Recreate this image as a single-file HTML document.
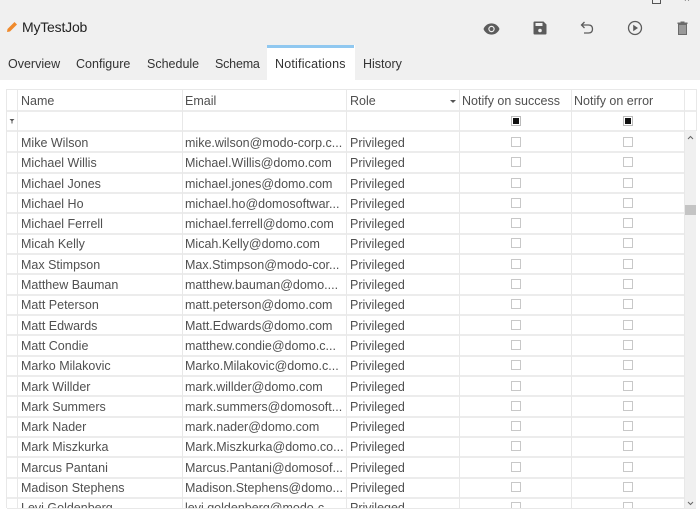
<!DOCTYPE html>
<html><head><meta charset="utf-8">
<style>
html,body{margin:0;padding:0;background:#fff}
#p{position:relative;width:700px;height:511px;overflow:hidden;background:#fff;font-family:"Liberation Sans",sans-serif;font-size:12.5px;color:#505050}
#p div{position:absolute;white-space:nowrap}
.hd{left:0;top:0;width:700px;height:80px;background:#f0f0f0}
.tab{top:57px;font-size:12.5px;color:#333;line-height:15px}
.v{top:89px;width:1px;height:419px;background:#e8e8e8}
.h{left:7px;width:678px;height:2px;background:#ececec}
.t{line-height:16px;height:16px}
.n{left:21px;margin-top:1px}.e{left:185px;margin-top:1px}.r{left:350px;margin-top:1px}
.c{width:8px;height:8px;border:1px solid #c8c8c8;background:#fff}
.c1{left:511px}.c2{left:623px}
.f{width:8px;height:8px;border:1px solid #bbb;background:#fff}
.f:after{content:"";position:absolute;left:1px;top:1px;width:6px;height:6px;background:#111}
</style></head><body>
<div id="p">
<div class="hd"></div>
<svg style="position:absolute;left:6px;top:20px" width="13" height="13" viewBox="0 0 13 13"><path d="M1 12 L1.5 9 L8.5 2 L11 4.5 L4 11.5 Z" fill="#f08a2c"/></svg>
<div style="left:22px;top:18px;font-size:14px;letter-spacing:-.2px;line-height:18px;color:#222">MyTestJob</div>
<div style="left:267px;top:45px;width:88px;height:35px;background:#fff"></div>
<div style="left:267px;top:45px;width:87px;height:3px;background:#90c8f0"></div>
<div class="tab" style="left:8px">Overview</div>
<div class="tab" style="left:76px;letter-spacing:.02px">Configure</div>
<div class="tab" style="left:147px">Schedule</div>
<div class="tab" style="left:215px;letter-spacing:-.2px">Schema</div>
<div class="tab" style="left:275px;letter-spacing:.2px">Notifications</div>
<div class="tab" style="left:363px">History</div>

<svg style="position:absolute;left:483px;top:23px" width="17" height="12" viewBox="0 0 17 12"><path d="M0.5 6 C3.5 -1.5 13.5 -1.5 16.5 6 C13.5 13.5 3.5 13.5 0.5 6 Z" fill="#5c5c5c"/><circle cx="8.5" cy="6" r="3.2" fill="#f0f0f0"/><circle cx="8.5" cy="6" r="2" fill="#5c5c5c"/></svg>
<svg style="position:absolute;left:533px;top:21px" width="14" height="14" viewBox="0 0 14 14"><path d="M1.5 0.5 H10.5 L13.5 3.5 V12.5 Q13.5 13.5 12.5 13.5 H1.5 Q0.5 13.5 0.5 12.5 V1.5 Q0.5 .5 1.5 .5 Z" fill="#5c5c5c"/><rect x="2.5" y="2" width="7" height="3" fill="#f0f0f0"/><circle cx="7" cy="9.5" r="1.8" fill="#f0f0f0"/></svg>
<svg style="position:absolute;left:580px;top:21px" width="14" height="14" viewBox="0 0 14 14"><path d="M4.5 1 L1.5 4 L4.5 7 M1.5 4 H8.5 Q12.5 4 12.5 8 Q12.5 12 8.5 12 H4" fill="none" stroke="#5c5c5c" stroke-width="1.3"/></svg>
<svg style="position:absolute;left:627px;top:20px" width="16" height="16" viewBox="0 0 16 16"><circle cx="8" cy="8" r="6.5" fill="none" stroke="#5c5c5c" stroke-width="1.3"/><path d="M6.2 4.8 L11 8 L6.2 11.2 Z" fill="#5c5c5c"/></svg>
<svg style="position:absolute;left:677px;top:21px" width="11" height="14" viewBox="0 0 11 14"><path d="M0.5 1.5 H10.5 V3 H0.5 Z M3.5 0.5 H7.5 V1.5 H3.5 Z" fill="#6a6a6a"/><path d="M1.5 3.5 H9.5 V13.5 H1.5 Z" fill="#999" stroke="#6a6a6a"/></svg>
<div style="left:652px;top:0;width:7px;height:3px;border:1px solid #555;border-top:0"></div>
<div style="left:684px;top:-5px;font-size:10px;line-height:10px;color:#555">×</div>

<div style="left:7px;top:89px;width:689px;height:1px;background:#e8e8e8"></div>
<div class="h" style="top:110px;width:689px"></div>
<div class="h" style="top:130px;width:689px"></div>

<div class="h" style="top:151px"></div><div class="h" style="top:172px"></div><div class="h" style="top:192px"></div><div class="h" style="top:212px"></div><div class="h" style="top:233px"></div><div class="h" style="top:253px"></div><div class="h" style="top:273px"></div><div class="h" style="top:294px"></div><div class="h" style="top:314px"></div><div class="h" style="top:334px"></div><div class="h" style="top:355px"></div><div class="h" style="top:375px"></div><div class="h" style="top:395px"></div><div class="h" style="top:416px"></div><div class="h" style="top:436px"></div><div class="h" style="top:456px"></div><div class="h" style="top:477px"></div><div class="h" style="top:497px"></div>

<div style="left:685px;top:131px;width:11px;height:377px;background:#f0f0f0"></div>
<div style="left:685px;top:205px;width:11px;height:10px;background:#c4c4c4"></div>
<svg style="position:absolute;left:687px;top:135px" width="7" height="5" viewBox="0 0 7 5"><path d="M1 4 L3.5 1.5 L6 4" fill="none" stroke="#666" stroke-width="1"/></svg>
<svg style="position:absolute;left:687px;top:501px" width="7" height="5" viewBox="0 0 7 5"><path d="M1 1 L3.5 3.5 L6 1" fill="none" stroke="#666" stroke-width="1"/></svg>

<div class="v" style="left:6px"></div>
<div class="v" style="left:17px"></div>
<div class="v" style="left:182px"></div>
<div class="v" style="left:346px"></div>
<div class="v" style="left:459px"></div>
<div class="v" style="left:571px"></div>
<div class="v" style="left:684px"></div>
<div style="left:696px;top:89px;width:1px;height:42px;background:#e8e8e8"></div>

<div class="t n" style="top:93px;margin-top:0">Name</div>
<div class="t e" style="top:93px;margin-top:0">Email</div>
<div class="t r" style="top:93px;margin-top:0">Role</div>
<div class="t" style="left:462px;top:93px">Notify on success</div>
<div class="t" style="left:574px;top:93px">Notify on error</div>
<div style="left:450px;top:100px;width:0;height:0;border:3px solid transparent;border-top:3px solid #555;border-bottom:0"></div>
<svg style="position:absolute;left:9px;top:118px" width="6" height="6" viewBox="0 0 6 6"><path d="M0.5 1 H5.5 L3.5 3 V5.5 H2.5 V3 Z" fill="#555"/></svg>
<div class="f" style="left:511px;top:116px"></div>
<div class="f" style="left:623px;top:116px"></div>

<div class="t n" style="top:134px">Mike Wilson</div><div class="t e" style="top:134px">mike.wilson@modo-corp.c...</div><div class="t r" style="top:134px">Privileged</div><div class="c c1" style="top:137px"></div><div class="c c2" style="top:137px"></div>
<div class="t n" style="top:154px">Michael Willis</div><div class="t e" style="top:154px">Michael.Willis@domo.com</div><div class="t r" style="top:154px">Privileged</div><div class="c c1" style="top:157px"></div><div class="c c2" style="top:157px"></div>
<div class="t n" style="top:175px">Michael Jones</div><div class="t e" style="top:175px">michael.jones@domo.com</div><div class="t r" style="top:175px">Privileged</div><div class="c c1" style="top:178px"></div><div class="c c2" style="top:178px"></div>
<div class="t n" style="top:195px">Michael Ho</div><div class="t e" style="top:195px">michael.ho@domosoftwar...</div><div class="t r" style="top:195px">Privileged</div><div class="c c1" style="top:198px"></div><div class="c c2" style="top:198px"></div>
<div class="t n" style="top:215px">Michael Ferrell</div><div class="t e" style="top:215px">michael.ferrell@domo.com</div><div class="t r" style="top:215px">Privileged</div><div class="c c1" style="top:218px"></div><div class="c c2" style="top:218px"></div>
<div class="t n" style="top:235px">Micah Kelly</div><div class="t e" style="top:235px">Micah.Kelly@domo.com</div><div class="t r" style="top:235px">Privileged</div><div class="c c1" style="top:238px"></div><div class="c c2" style="top:238px"></div>
<div class="t n" style="top:256px">Max Stimpson</div><div class="t e" style="top:256px">Max.Stimpson@modo-cor...</div><div class="t r" style="top:256px">Privileged</div><div class="c c1" style="top:259px"></div><div class="c c2" style="top:259px"></div>
<div class="t n" style="top:276px">Matthew Bauman</div><div class="t e" style="top:276px">matthew.bauman@domo....</div><div class="t r" style="top:276px">Privileged</div><div class="c c1" style="top:279px"></div><div class="c c2" style="top:279px"></div>
<div class="t n" style="top:296px">Matt Peterson</div><div class="t e" style="top:296px">matt.peterson@domo.com</div><div class="t r" style="top:296px">Privileged</div><div class="c c1" style="top:299px"></div><div class="c c2" style="top:299px"></div>
<div class="t n" style="top:317px">Matt Edwards</div><div class="t e" style="top:317px">Matt.Edwards@domo.com</div><div class="t r" style="top:317px">Privileged</div><div class="c c1" style="top:320px"></div><div class="c c2" style="top:320px"></div>
<div class="t n" style="top:337px">Matt Condie</div><div class="t e" style="top:337px">matthew.condie@domo.c...</div><div class="t r" style="top:337px">Privileged</div><div class="c c1" style="top:340px"></div><div class="c c2" style="top:340px"></div>
<div class="t n" style="top:357px">Marko Milakovic</div><div class="t e" style="top:357px">Marko.Milakovic@domo.c...</div><div class="t r" style="top:357px">Privileged</div><div class="c c1" style="top:360px"></div><div class="c c2" style="top:360px"></div>
<div class="t n" style="top:378px">Mark Willder</div><div class="t e" style="top:378px">mark.willder@domo.com</div><div class="t r" style="top:378px">Privileged</div><div class="c c1" style="top:381px"></div><div class="c c2" style="top:381px"></div>
<div class="t n" style="top:398px">Mark Summers</div><div class="t e" style="top:398px">mark.summers@domosoft...</div><div class="t r" style="top:398px">Privileged</div><div class="c c1" style="top:401px"></div><div class="c c2" style="top:401px"></div>
<div class="t n" style="top:418px">Mark Nader</div><div class="t e" style="top:418px">mark.nader@domo.com</div><div class="t r" style="top:418px">Privileged</div><div class="c c1" style="top:421px"></div><div class="c c2" style="top:421px"></div>
<div class="t n" style="top:438px">Mark Miszkurka</div><div class="t e" style="top:438px">Mark.Miszkurka@domo.co...</div><div class="t r" style="top:438px">Privileged</div><div class="c c1" style="top:441px"></div><div class="c c2" style="top:441px"></div>
<div class="t n" style="top:459px">Marcus Pantani</div><div class="t e" style="top:459px">Marcus.Pantani@domosof...</div><div class="t r" style="top:459px">Privileged</div><div class="c c1" style="top:462px"></div><div class="c c2" style="top:462px"></div>
<div class="t n" style="top:479px">Madison Stephens</div><div class="t e" style="top:479px">Madison.Stephens@domo...</div><div class="t r" style="top:479px">Privileged</div><div class="c c1" style="top:482px"></div><div class="c c2" style="top:482px"></div>
<div class="t n" style="top:499px">Levi Goldenberg</div><div class="t e" style="top:499px">levi.goldenberg@modo-c...</div><div class="t r" style="top:499px">Privileged</div><div class="c c1" style="top:502px"></div><div class="c c2" style="top:502px"></div>

<div style="left:0;top:508px;width:700px;height:3px;background:#fff"></div>
<div style="left:7px;top:508px;width:689px;height:1px;background:#e8e8e8"></div>
</div>
</body></html>
